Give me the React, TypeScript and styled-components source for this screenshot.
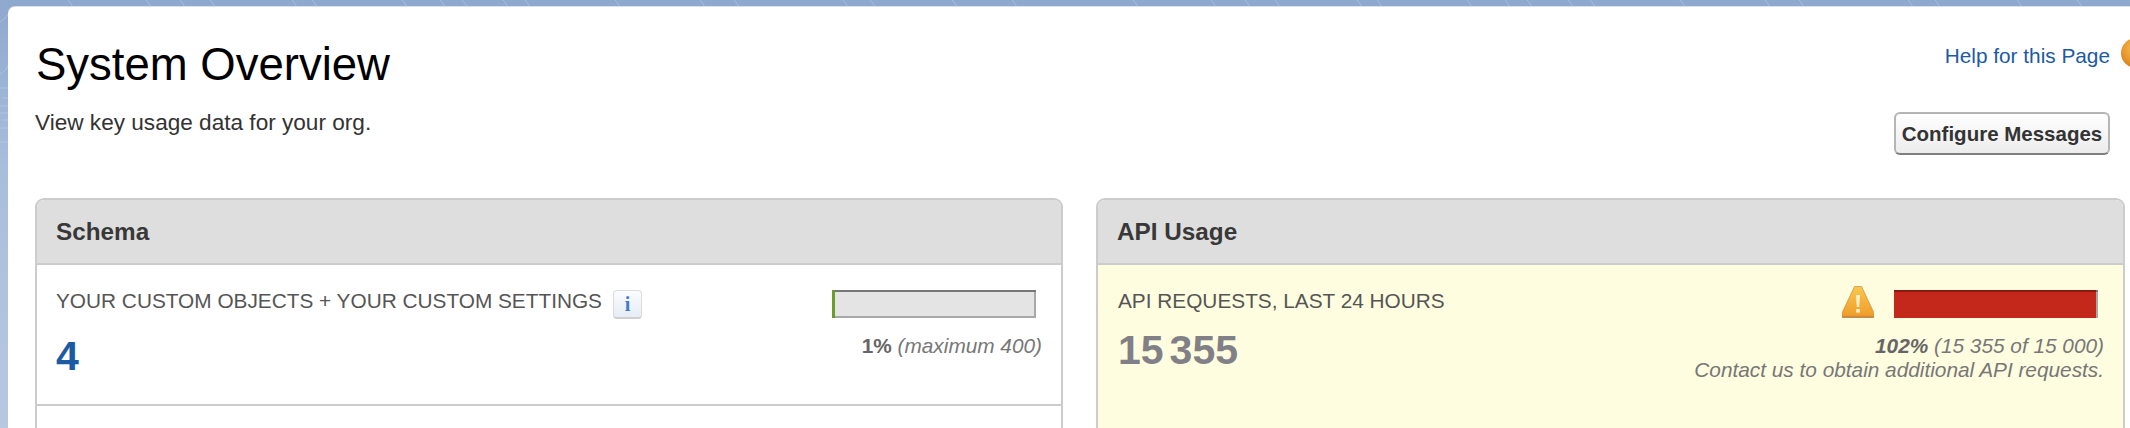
import styled, { createGlobalStyle } from "styled-components";

const GlobalStyle = createGlobalStyle`
  html, body {
    margin: 0;
    height: 428px;
    overflow: hidden;
    background: linear-gradient(180deg, #8ea8ce 0, #a9bedc 40%, #b7c8e1 100%);
    font-family: "Liberation Sans", Arial, sans-serif;
  }
`;

const Page = styled.div`
  position: relative;
  padding: 7px 0 0 8px;
  height: 428px;
  box-sizing: border-box;
  overflow: hidden;
`;

const Backdrop = styled.svg`
  position: absolute;
  left: 0;
  top: 0;
`;

const Card = styled.main`
  position: relative;
  width: 2142px;
  height: 500px;
  box-sizing: border-box;
  padding: 0 25px 0 27px;
  background: #fff;
  border-radius: 7px;
  box-shadow: 0 -1px #d9e1ee;
`;

const PageHeader = styled.header`
  display: flex;
  justify-content: space-between;
  height: 191px;
`;

const TitleBlock = styled.div`
  padding-top: 30px;
`;

const Title = styled.h1`
  margin: 0 0 0 1px;
  font-size: 45.5px;
  line-height: 56px;
  font-weight: 400;
  color: #000;
`;

const Subtitle = styled.p`
  margin: 16px 0 0;
  font-size: 22.6px;
  line-height: 28px;
  color: #333;
`;

const Actions = styled.div`
  display: flex;
  flex-direction: column;
  align-items: flex-end;
  margin-right: 15px;
  padding-top: 31px;
`;

const HelpRow = styled.div`
  display: flex;
  align-items: center;
  gap: 11px;
  margin-right: -41px;
  height: 30px;
`;

const HelpLink = styled.a`
  padding-top: 6px;
  font-size: 20.8px;
  color: #1b5aa5;
  text-decoration: none;
`;

const HelpIcon = styled.span`
  width: 30px;
  height: 30px;
  border-radius: 50%;
  background: radial-gradient(circle at 50% 35%, #f7c25c 0, #e8962a 55%, #b86f16 100%);
`;

const Button = styled.button`
  margin-top: 44px;
  width: 216px;
  height: 43px;
  padding: 0;
  font: bold 20.5px "Liberation Sans", Arial, sans-serif;
  color: #333;
  background: linear-gradient(180deg, #fff 0, #ececec 100%);
  border: 2px solid #b5b5b5;
  border-bottom-color: #7f7f7f;
  border-radius: 6px;
`;

const Panels = styled.div`
  display: grid;
  grid-template-columns: 1028px 1029px;
  gap: 33px;
`;

const Panel = styled.section`
  display: flex;
  flex-direction: column;
  border: 2px solid #ccc;
  border-bottom: 0;
  border-radius: 9px 9px 0 0;
  overflow: hidden;
  height: 300px;
`;

const PanelHeader = styled.h2`
  margin: 0;
  height: 65px;
  flex: none;
  box-sizing: border-box;
  padding: 0 19px;
  display: flex;
  align-items: center;
  font-size: 24.3px;
  font-weight: 700;
  color: #383838;
  background: #dedede;
  border-bottom: 2px solid #ccc;
`;

const Metric = styled.div<{ $warn?: boolean }>`
  display: flex;
  justify-content: space-between;
  flex: ${(p) => (p.$warn ? "1" : "none")};
  height: 141px;
  box-sizing: border-box;
  padding: 25px 19px 0 ${(p) => (p.$warn ? "20px" : "19px")};
  background: ${(p) => (p.$warn ? "#fefde0" : "#fff")};
  border-bottom: ${(p) => (p.$warn ? "0" : "2px solid #ccc")};
`;

const MetricLabel = styled.div`
  display: flex;
  align-items: flex-start;
  gap: 11px;
  height: 29px;
  font-size: 20.8px;
  line-height: 22px;
  color: #555;
`;

const InfoButton = styled.span`
  width: 29px;
  height: 29px;
  box-sizing: border-box;
  display: flex;
  align-items: center;
  justify-content: center;
  font: bold 20px "Liberation Serif", serif;
  color: #3d7bd6;
  background: linear-gradient(180deg, #fbfcfe 0, #e6edf6 100%);
  border: 1px solid #dcdcdc;
  border-bottom: 2px solid #cfcfcf;
  border-radius: 4px;
`;

const MetricValue = styled.div<{ $muted?: boolean }>`
  margin-top: ${(p) => (p.$muted ? "8px" : "14px")};
  font-size: 41px;
  line-height: 46px;
  font-weight: 700;
  color: ${(p) => (p.$muted ? "#808086" : "#1b5aa5")};
`;

const ThinGap = styled.span`
  margin-left: 6px;
`;

const Usage = styled.div`
  display: flex;
  flex-direction: column;
  align-items: flex-end;
`;

const MeterRow = styled.div`
  display: flex;
  align-items: flex-end;
  gap: 20px;
  height: 28px;
  margin-right: 6px;
`;

const Meter = styled.div`
  width: 204px;
  height: 28px;
  background: #e4e4e4;
  box-shadow: inset 0 2px #777, inset -2px -2px #a8a8a8;
`;

const MeterFill = styled.div<{ $tone: "ok" | "over" }>`
  min-width: 3px;
  height: 100%;
  background: ${(p) => (p.$tone === "over" ? "#c4281b" : "#6a9e2a")};
  box-shadow: ${(p) => (p.$tone === "over" ? "inset 0 2px #8a1a10" : "none")};
`;

const UsageText = styled.div`
  margin-top: 16px;
  font-size: 20.8px;
  line-height: 24px;
  font-style: italic;
  text-align: right;
  color: #777;
`;

const UsagePercent = styled.b`
  color: #666;
`;

const PlainPercent = styled.b`
  font-style: normal;
  color: #666;
`;

const WarningIcon = () => (
  <svg width="32" height="32" viewBox="0 0 32 32">
    <defs>
      <linearGradient id="warn" x1="0" y1="0" x2="0" y2="1">
        <stop offset="0" stopColor="#f9c850" />
        <stop offset="1" stopColor="#f09a28" />
      </linearGradient>
    </defs>
    <path d="M12.5 0.5h7L32 27v5H0v-5z" fill="url(#warn)" />
    <path d="M12.5 0.5h7L32 27v4H0v-4z" fill="none" stroke="#c98a45" strokeWidth="1" opacity="0.7" />
    <path d="M0.7 30.8h30.6" stroke="#c98a45" strokeWidth="2" />
    <path d="M14 9h4l-0.8 12h-2.4z" fill="#fdf0c8" />
    <rect x="14.2" y="23" width="3.6" height="3.6" fill="#fdf0c8" />
  </svg>
);

// faint pattern of the page background, only its edges show round the card
const strokeXs = [68, 146, 180, 210, 292, 312, 402, 440, 462, 503, 525, 615, 700, 734, 843, 870, 952, 1012];

const BackgroundLines = () => (
  <Backdrop width="2130" height="428" fill="none" stroke="#c3d1e6" strokeWidth="1" opacity="0.55">
    {[0, 1065].map((shift) =>
      strokeXs.map((x) => (
        <path key={`${shift}-${x}`} d={`M${x + shift} 0c2 2 3 4 5 7`} />
      ))
    )}
    <path d="M0 22c4-3 7-5 8-8M0 74c4-2 7-5 8-9" />
    <path d="M0 88h8M2 98h6M0 106h8M0 113h8M2 120h6M0 128h8M0 142h8" />
  </Backdrop>
);

const usage = (value: number, max: number) => Math.min((value / max) * 100, 99);

export default function App() {
  return (
    <Page>
      <GlobalStyle />
      <BackgroundLines />
      <Card>
        <PageHeader>
          <TitleBlock>
            <Title>System Overview</Title>
            <Subtitle>View key usage data for your org.</Subtitle>
          </TitleBlock>
          <Actions>
            <HelpRow>
              <HelpLink href="#">Help for this Page</HelpLink>
              <HelpIcon />
            </HelpRow>
            <Button>Configure Messages</Button>
          </Actions>
        </PageHeader>
        <Panels>
          <Panel>
            <PanelHeader>Schema</PanelHeader>
            <Metric>
              <div>
                <MetricLabel>
                  YOUR CUSTOM OBJECTS + YOUR CUSTOM SETTINGS
                  <InfoButton>i</InfoButton>
                </MetricLabel>
                <MetricValue>4</MetricValue>
              </div>
              <Usage>
                <MeterRow>
                  <Meter>
                    <MeterFill $tone="ok" style={{ width: `${usage(4, 400)}%` }} />
                  </Meter>
                </MeterRow>
                <UsageText>
                  <PlainPercent>1%</PlainPercent> (maximum 400)
                </UsageText>
              </Usage>
            </Metric>
          </Panel>
          <Panel>
            <PanelHeader>API Usage</PanelHeader>
            <Metric $warn>
              <div>
                <MetricLabel>API REQUESTS, LAST 24 HOURS</MetricLabel>
                <MetricValue $muted>
                  15<ThinGap>355</ThinGap>
                </MetricValue>
              </div>
              <Usage>
                <MeterRow>
                  <WarningIcon />
                  <Meter>
                    <MeterFill $tone="over" style={{ width: `${usage(15355, 15000)}%` }} />
                  </Meter>
                </MeterRow>
                <UsageText>
                  <UsagePercent>102%</UsagePercent> (15 355 of 15 000)
                  <br />
                  Contact us to obtain additional API requests.
                </UsageText>
              </Usage>
            </Metric>
          </Panel>
        </Panels>
      </Card>
    </Page>
  );
}
